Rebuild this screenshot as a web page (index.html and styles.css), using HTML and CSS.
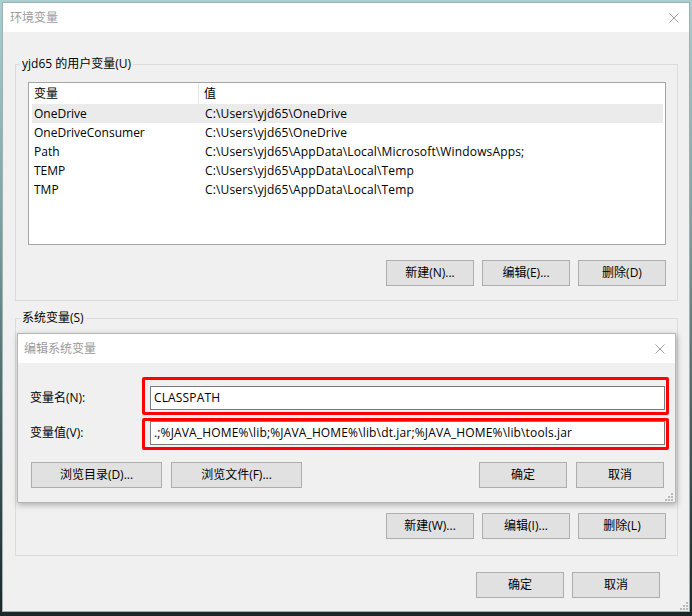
FILE: index.html
```html
<!DOCTYPE html>
<html lang="zh-CN">

<head>
    <meta charset="UTF-8">
    <meta name="viewport" content="width=device-width, initial-scale=1.0">
    <title>环境变量</title>

    <link rel="stylesheet" href="styles.css">
</head>

<body>

    <div class="window">

        <div class="titlebar">
            <span class="title">环境变量</span>
            <svg class="close" width="10" height="10" viewBox="0 0 10 10">
                <path d="M0.5 0.5 L9.5 9.5 M9.5 0.5 L0.5 9.5" />
            </svg>
        </div>

        <div class="client">

            <fieldset class="group group-user">
                <legend>yjd65 的用户变量(U)</legend>

                <div class="listview list-user">
                    <div class="lv-header">
                        <div class="lv-name">变量</div>
                        <div class="lv-value">值</div>
                    </div>
                    <div class="lv-rows">
                        <div class="lv-row selected">
                            <div class="lv-name">OneDrive</div>
                            <div class="lv-value">C:\Users\yjd65\OneDrive</div>
                        </div>
                        <div class="lv-row">
                            <div class="lv-name">OneDriveConsumer</div>
                            <div class="lv-value">C:\Users\yjd65\OneDrive</div>
                        </div>
                        <div class="lv-row">
                            <div class="lv-name">Path</div>
                            <div class="lv-value">C:\Users\yjd65\AppData\Local\Microsoft\WindowsApps;</div>
                        </div>
                        <div class="lv-row">
                            <div class="lv-name">TEMP</div>
                            <div class="lv-value">C:\Users\yjd65\AppData\Local\Temp</div>
                        </div>
                        <div class="lv-row">
                            <div class="lv-name">TMP</div>
                            <div class="lv-value">C:\Users\yjd65\AppData\Local\Temp</div>
                        </div>
                    </div>
                </div>

                <div class="btn-row">
                    <button class="btn">新建(N)...</button>
                    <button class="btn">编辑(E)...</button>
                    <button class="btn">删除(D)</button>
                </div>
            </fieldset>

            <fieldset class="group group-system">
                <legend>系统变量(S)</legend>

                <!-- covered by the edit dialog -->
                <div class="listview list-system"></div>

                <div class="btn-row">
                    <button class="btn">新建(W)...</button>
                    <button class="btn">编辑(I)...</button>
                    <button class="btn">删除(L)</button>
                </div>
            </fieldset>

            <div class="footer">
                <button class="btn">确定</button>
                <button class="btn">取消</button>
            </div>

        </div>

        <!-- edit dialog sits on top of the main window -->
        <div class="dialog">
            <div class="titlebar dialog-titlebar">
                <span class="title">编辑系统变量</span>
                <svg class="close" width="10" height="10" viewBox="0 0 10 10">
                    <path d="M0.5 0.5 L9.5 9.5 M9.5 0.5 L0.5 9.5" />
                </svg>
            </div>

            <div class="dialog-body">
                <div class="form-grid">
                    <label class="field-label">变量名(N):</label>
                    <div class="mark mark-name">
                        <div class="textbox">CLASSPATH</div>
                    </div>

                    <label class="field-label">变量值(V):</label>
                    <div class="mark mark-value">
                        <div class="textbox">.;%JAVA_HOME%\lib;%JAVA_HOME%\lib\dt.jar;%JAVA_HOME%\lib\tools.jar</div>
                    </div>
                </div>

                <div class="dialog-buttons">
                    <button class="btn btn-wide">浏览目录(D)...</button>
                    <button class="btn btn-wide">浏览文件(F)...</button>
                    <span class="spacer"></span>
                    <button class="btn">确定</button>
                    <button class="btn">取消</button>
                </div>
            </div>

            <svg class="grip" width="8" height="8" viewBox="0 0 8 8">
                <rect x="6" y="0" width="2" height="2" />
                <rect x="3" y="3" width="2" height="2" />
                <rect x="6" y="3" width="2" height="2" />
                <rect x="0" y="6" width="2" height="2" />
                <rect x="3" y="6" width="2" height="2" />
                <rect x="6" y="6" width="2" height="2" />
            </svg>
        </div>

        <svg class="grip" width="8" height="8" viewBox="0 0 8 8">
            <rect x="6" y="0" width="2" height="2" />
            <rect x="3" y="3" width="2" height="2" />
            <rect x="6" y="3" width="2" height="2" />
            <rect x="0" y="6" width="2" height="2" />
            <rect x="3" y="6" width="2" height="2" />
            <rect x="6" y="6" width="2" height="2" />
        </svg>

    </div>

</body>

</html>
```

FILE: styles.css
```css
body {
    margin: 0;
    height: 616px;
    overflow: hidden;
    background: linear-gradient(180deg, #a9cfd0 0%, #7fa3a4 35%, #3d5556 75%, #1b2526 100%);
    font-family: "Open Sans", "Noto Sans CJK SC", sans-serif;
    font-size: 12px;
    color: #000;
}

.window {
    position: relative;
    margin: 2px 0 0 2px;
    width: 688px;
    height: 610px;
    box-sizing: border-box;
    border: 1px solid #9fb0b0;
    background-color: #f0f0f0;
    overflow: hidden;
}

.titlebar {
    height: 29px;
    background-color: #fff;
    display: flex;
    align-items: center;
    justify-content: space-between;
    padding: 0 10px 0 7px;
}

.title {
    color: #9b9b9b;
    line-height: 16px;
}

.close path {
    stroke: #a3a3a3;
    stroke-width: 1;
    fill: none;
}

.client {
    padding: 24px 11px 0 12px;
}

/* group boxes */
.group {
    margin: 0;
    padding: 10px 11px 14px 12px;
    border: 1px solid #dcdcdc;
    min-width: 0;
}

.group legend {
    margin-left: -8px;
    padding: 0 2px;
    line-height: 16px;
}

.group-system {
    margin-top: 9px;
    padding-bottom: 16px;
}

/* list view */
.listview {
    border: 1px solid #a5a5a5;
    background-color: #fff;
    box-sizing: border-box;
}

.list-user {
    height: 163px;
}

.list-system {
    height: 162px;
}

.lv-header {
    display: flex;
    height: 21px;
    line-height: 21px;
}

.lv-header .lv-name {
    width: 170px;
    padding-left: 5px;
    box-sizing: border-box;
    border-right: 1px solid #e5e5e5;
}

.lv-header .lv-value {
    padding-left: 5px;
}

.lv-rows {
    padding: 0 2px 0 3px;
}

.lv-row {
    display: flex;
    height: 19px;
    line-height: 19px;
    white-space: nowrap;
}

.lv-row.selected {
    background-color: #ebebeb;
}

.lv-row .lv-name {
    width: 168px;
    padding-left: 2px;
    box-sizing: border-box;
}

.lv-row .lv-value {
    padding-left: 5px;
    letter-spacing: 0.15px;
}

/* buttons */
.btn {
    font: inherit;
    color: #000;
    width: 88px;
    height: 26px;
    padding: 0;
    background-color: #e1e1e1;
    border: 1px solid #adadad;
    border-radius: 0;
    line-height: 24px;
    white-space: nowrap;
}

.btn-wide {
    width: 131px;
}

.btn-row {
    display: flex;
    justify-content: flex-end;
    gap: 8px;
    margin-top: 15px;
}

.footer {
    display: flex;
    justify-content: flex-end;
    gap: 8px;
    margin-top: 16px;
    padding-right: 18px;
}

/* resize grips */
.grip {
    position: absolute;
    right: 1px;
    bottom: 1px;
}

.grip rect {
    fill: #b9b9b9;
}

/* edit dialog */
.dialog {
    position: absolute;
    left: 14px;
    top: 330px;
    width: 659px;
    box-sizing: border-box;
    border: 1px solid #b5b5b5;
    background-color: #f0f0f0;
    box-shadow: 1px 2px 6px rgba(0, 0, 0, 0.28);
}

.dialog-titlebar {
    padding: 0 10px 0 6px;
}

.dialog-body {
    padding: 14px 6px 14px 12px;
}

.form-grid {
    display: grid;
    grid-template-columns: 112px 1fr;
    row-gap: 3px;
    align-items: end;
}

.field-label {
    height: 24px;
    line-height: 24px;
    margin-bottom: 5px;
}

.mark {
    border: 3px solid #ff0000;
    border-radius: 2px;
    padding: 6px 1px 2px 5px;
}

.mark-value {
    padding-top: 0;
}

.textbox {
    height: 24px;
    box-sizing: border-box;
    border: 1px solid #7a7a7a;
    background-color: #fff;
    padding-left: 3px;
    line-height: 22px;
    white-space: nowrap;
    overflow: hidden;
    letter-spacing: 0.15px;
}

.dialog-buttons {
    display: flex;
    gap: 9px;
    margin: 12px 5px 0 1px;
}

.dialog-buttons .spacer {
    flex: 1;
}

.dialog .grip {
    right: 2px;
    bottom: 1px;
}
```
